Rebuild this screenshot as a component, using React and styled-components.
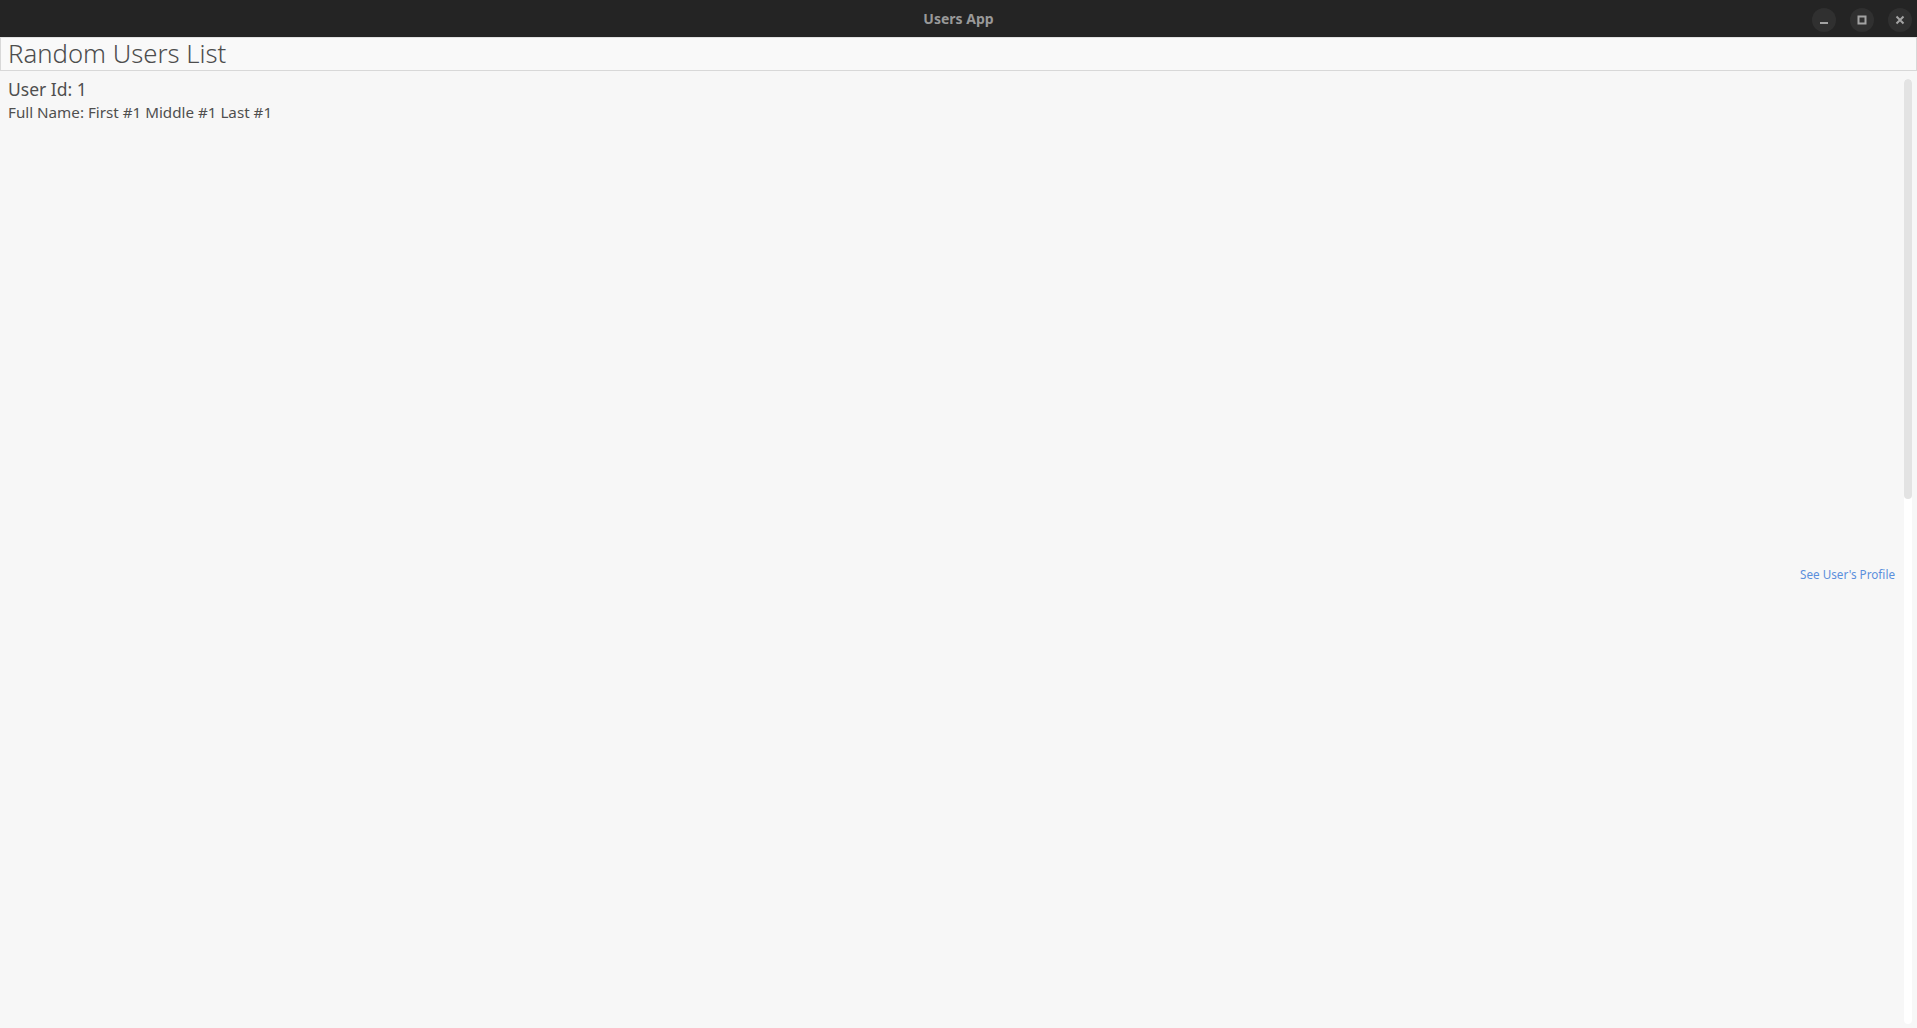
import React from "react";
import styled, { createGlobalStyle } from "styled-components";

const GlobalStyle = createGlobalStyle`
  html, body {
    margin: 0;
    padding: 0;
    height: 100%;
    overflow: hidden;
    background: #f7f7f7;
  }
  #root {
    height: 100%;
  }
`;

const users = [{ id: 1, first: "First #1", middle: "Middle #1", last: "Last #1" }];

export default function App() {
  return (
    <>
      <GlobalStyle />
      <Window>
        <TitleBar>
          <span />
          <WindowTitle>Users App</WindowTitle>
          <Controls>
            <ControlBtn aria-label="minimize">
              <svg width="10" height="10" viewBox="0 0 10 10">
                <rect x="1" y="7" width="8" height="2" fill="#a3a3a3" />
              </svg>
            </ControlBtn>
            <ControlBtn aria-label="maximize">
              <svg width="10" height="10" viewBox="0 0 10 10">
                <rect x="1.5" y="1.5" width="7" height="7" fill="none" stroke="#a3a3a3" strokeWidth="2" />
              </svg>
            </ControlBtn>
            <ControlBtn aria-label="close">
              <svg width="10" height="10" viewBox="0 0 10 10">
                <path d="M1.5 1.5 L8.5 8.5 M8.5 1.5 L1.5 8.5" stroke="#a3a3a3" strokeWidth="2" />
              </svg>
            </ControlBtn>
          </Controls>
        </TitleBar>
        <Header>Random Users List</Header>
        <Body>
          <List>
            {users.map((u) => (
              <UserRow key={u.id}>
                <UserInfo>
                  <UserId>User Id: {u.id}</UserId>
                  <FullName>
                    Full Name: {u.first} {u.middle} {u.last}
                  </FullName>
                </UserInfo>
                <ProfileLink href="#">See User's Profile</ProfileLink>
              </UserRow>
            ))}
          </List>
          <ScrollTrack>
            <ScrollThumb />
          </ScrollTrack>
        </Body>
      </Window>
    </>
  );
}

const Window = styled.div`
  display: flex;
  flex-direction: column;
  height: 100vh;
  font-family: "Noto Sans", "Open Sans", sans-serif;
  color: #4f4f4f;
`;

const TitleBar = styled.div`
  display: grid;
  grid-template-columns: 1fr auto 1fr;
  align-items: center;
  height: 37px;
  flex-shrink: 0;
  background: #242424;
`;

const WindowTitle = styled.div`
  font-size: 14px;
  font-weight: bold;
  color: #999999;
`;

const Controls = styled.div`
  display: flex;
  justify-self: end;
  gap: 14px;
  padding-right: 5px;
  padding-top: 2px;
`;

const ControlBtn = styled.button`
  display: flex;
  align-items: center;
  justify-content: center;
  width: 24px;
  height: 24px;
  padding: 0;
  border: none;
  border-radius: 50%;
  background: #303030;
`;

const Header = styled.div`
  flex-shrink: 0;
  height: 32px;
  line-height: 32px;
  padding-left: 7px;
  border: 1px solid #d8d8d8;
  border-top-color: #e2e2e2;
  background: #f9f9f9;
  font-size: 25.7px;
  font-weight: 300;
  color: #4d4d4d;
`;

const Body = styled.div`
  display: flex;
  flex: 1;
  min-height: 0;
`;

const List = styled.div`
  flex: 1;
  overflow: hidden;
`;

const UserRow = styled.div`
  display: flex;
  justify-content: space-between;
  height: 994px;
  padding: 6px 9px 0 8px;
`;

const UserInfo = styled.div`
  display: flex;
  flex-direction: column;
  align-self: flex-start;
`;

const UserId = styled.div`
  font-size: 17.5px;
  line-height: 25px;
`;

const FullName = styled.div`
  font-size: 15.2px;
  line-height: 20px;
`;

const ProfileLink = styled.a`
  align-self: center;
  font-size: 11.7px;
  color: #5b8fdc;
  text-decoration: none;
`;

const ScrollTrack = styled.div`
  width: 8px;
  margin: 8px 5px 4px 0;
  border-radius: 4px;
  background: #ffffff;
  overflow: hidden;
`;

const ScrollThumb = styled.div`
  height: 420px;
  border-radius: 4px;
  background: #e3e3e3;
`;
